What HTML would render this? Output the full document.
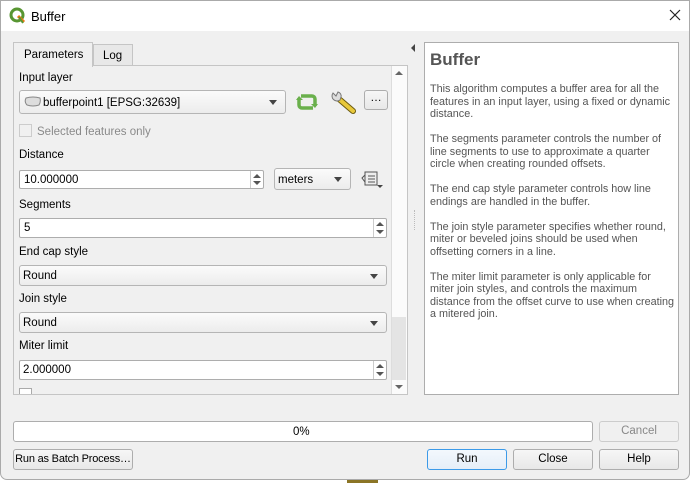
<!DOCTYPE html>
<html><head><style>
*{box-sizing:border-box}
body{margin:0;width:693px;height:483px;background:#fff;font-family:"Liberation Sans",Arial,sans-serif;font-size:11.5px;color:#000;position:relative;overflow:hidden}
.a{position:absolute}
.win{left:0;top:0;width:690px;height:480px;background:#f0f0f0;border:1px solid #aaa;border-radius:0 0 7px 7px}
.title{left:1px;top:1px;width:688px;height:30px;background:#fff}
.inp{background:#fff;border:1px solid #adadad;border-radius:2px}
.cb{background:linear-gradient(#fbfbfb,#ececec);border:1px solid #b5b5b5;border-radius:3px}
.arr{position:absolute;right:8px;top:50%;margin-top:-2px;width:0;height:0;border-left:4px solid transparent;border-right:4px solid transparent;border-top:5px solid #444}
.spin{position:absolute;right:0;top:0;bottom:0;width:13px;border-left:1px solid #ccc}
.spin:before{content:"";position:absolute;left:2px;top:3px;border-left:4px solid transparent;border-right:4px solid transparent;border-bottom:4px solid #555}
.spin:after{content:"";position:absolute;left:2px;bottom:3px;border-left:4px solid transparent;border-right:4px solid transparent;border-top:4px solid #555}
.t{position:absolute;white-space:nowrap}
.btn{background:linear-gradient(#f6f6f6,#e8e8e8);border:1px solid #adadad;border-radius:3px;text-align:center;line-height:19px;white-space:nowrap}
.help p{margin:0 0 12.5px 0}
</style></head><body>
<div class="a win"></div>
<div class="a" style="left:347px;top:480px;width:31px;height:3px;background:#8b7526"></div>
<div class="a title"></div>
<svg class="a" style="left:9px;top:7px" width="17" height="17" viewBox="0 0 17 17"><circle cx="8" cy="8" r="6" fill="none" stroke="#589632" stroke-width="3"/><path d="M9 9 L15 15" stroke="#ee7913" stroke-width="3"/><path d="M10 10 L14 16" stroke="#589632" stroke-width="2"/></svg>
<div class="t" style="left:31px;top:9px;font-size:13px">Buffer</div>
<svg class="a" style="left:669px;top:9px" width="12" height="12"><path d="M1 1 L11 11 M11 1 L1 11" stroke="#222" stroke-width="1.2"/></svg>

<div class="a" style="left:93px;top:44px;width:40px;height:22px;background:#e8e8e8;border:1px solid #c5c5c5"></div>
<div class="t" style="left:103px;top:50px">Log</div>
<div class="a" style="left:13px;top:65px;width:395px;height:330px;background:#f0f0f0;border:1px solid #c5c5c5"></div>
<div class="a" style="left:13px;top:42px;width:80px;height:25px;background:#f0f0f0;border:1px solid #c5c5c5;border-bottom:none"></div>
<div class="t" style="left:24px;top:49px">Parameters</div>
<div class="a" style="left:391px;top:66px;width:16px;height:328px;background:#fbfbfb;border-left:1px solid #ddd"></div>
<div class="a" style="left:392px;top:317px;width:14px;height:63px;background:#e4e4e4"></div>
<div class="a" style="left:395px;top:71px;border-left:4px solid transparent;border-right:4px solid transparent;border-bottom:4px solid #666"></div>
<div class="a" style="left:395px;top:385px;border-left:4px solid transparent;border-right:4px solid transparent;border-top:4px solid #666"></div>

<div class="t" style="left:19px;top:72px">Input layer</div>
<div class="a cb" style="left:19px;top:90px;width:267px;height:24px"><div class="arr"></div></div>
<svg class="a" style="left:24px;top:96px" width="18" height="11"><path d="M2 2 Q9 0 16 2 Q17 6 15 9 Q9 11 3 9 Q0 6 2 2Z" fill="#ddd" stroke="#888"/></svg>
<div class="t" style="left:43px;top:97px">bufferpoint1 [EPSG:32639]</div>
<svg class="a" style="left:295px;top:91px" width="24" height="22" viewBox="0 0 24 22"><path d="M6 5 H17 A3 3 0 0 1 20 8 V15 M18 17 H7 A3 3 0 0 1 4 14 V7" fill="none" stroke="#6ab04c" stroke-width="3.5"/><path d="M1 9 L4 5 L8 9Z M16 13 L20 17 L23 13Z" fill="#6ab04c"/></svg>
<svg class="a" style="left:330px;top:89px" width="26" height="26" viewBox="0 0 26 26"><path d="M9 10 L23 22" stroke="#6b5b12" stroke-width="6" stroke-linecap="round"/><path d="M9 10 L23 22" stroke="#e8c83a" stroke-width="4" stroke-linecap="round"/><path d="M3 4 A5 5 0 0 0 10 11 L11 8 A4 4 0 0 0 8 3 L6 7Z" fill="#ddd" stroke="#777"/></svg>
<div class="a btn" style="left:364px;top:90px;width:24px;height:20px;line-height:14px">…</div>

<div class="a" style="left:19px;top:124px;width:13px;height:13px;border:1px solid #ccc;background:#f0f0f0"></div>
<div class="t" style="left:37px;top:126px;color:#8a8a8a">Selected features only</div>

<div class="t" style="left:19px;top:149px">Distance</div>
<div class="a inp" style="left:19px;top:170px;width:245px;height:19px"><div class="spin"></div></div>
<div class="t" style="left:24px;top:174px">10.000000</div>
<div class="a cb" style="left:274px;top:168px;width:77px;height:22px"><div class="arr"></div></div>
<div class="t" style="left:278px;top:174px">meters</div>
<svg class="a" style="left:360px;top:170px" width="24" height="20"><path d="M5 2 H17 V15 H5Z M2 8 L5 5 V12Z" fill="#eee" stroke="#555"/><path d="M8 6 H15 M8 9 H15 M8 12 H15" stroke="#555"/><path d="M17 15 L23 15 L20 18Z" fill="#444"/></svg>

<div class="t" style="left:19px;top:199px">Segments</div>
<div class="a inp" style="left:19px;top:218px;width:368px;height:20px"><div class="spin"></div></div>
<div class="t" style="left:24px;top:222px">5</div>

<div class="t" style="left:19px;top:246px">End cap style</div>
<div class="a cb" style="left:19px;top:265px;width:368px;height:21px"><div class="arr"></div></div>
<div class="t" style="left:23px;top:270px">Round</div>

<div class="t" style="left:19px;top:293px">Join style</div>
<div class="a cb" style="left:19px;top:312px;width:368px;height:21px"><div class="arr"></div></div>
<div class="t" style="left:23px;top:317px">Round</div>

<div class="t" style="left:19px;top:340px">Miter limit</div>
<div class="a inp" style="left:19px;top:360px;width:368px;height:20px"><div class="spin"></div></div>
<div class="t" style="left:23px;top:364px">2.000000</div>
<div class="a" style="left:19px;top:388px;width:13px;height:6px;border:1px solid #aaa;border-bottom:none;background:#fff"></div>

<div class="a" style="left:411px;top:44px;border-top:4px solid transparent;border-bottom:4px solid transparent;border-right:4px solid #444"></div>
<div class="a" style="left:414px;top:210px;width:1px;height:20px;border-left:1px dotted #bbb"></div>

<div class="a help" style="left:424px;top:42px;width:255px;height:353px;background:#fff;border:1px solid #adadad;padding:6px 1px 6px 5px;color:#555;font-size:10.8px;line-height:12.5px">
<div style="font-size:17px;font-weight:bold;margin:1px 0 13px;line-height:20px">Buffer</div>
<p>This algorithm computes a buffer area for all the features in an input layer, using a fixed or dynamic distance.</p>
<p>The segments parameter controls the number of line segments to use to approximate a quarter circle when creating rounded offsets.</p>
<p>The end cap style parameter controls how line endings are handled in the buffer.</p>
<p>The join style parameter specifies whether round, miter or beveled joins should be used when offsetting corners in a line.</p>
<p>The miter limit parameter is only applicable for miter join styles, and controls the maximum distance from the offset curve to use when creating a mitered join.</p>
</div>

<div class="a inp" style="left:13px;top:421px;width:580px;height:21px;border-radius:3px"></div>
<div class="t" style="left:293px;top:426px">0%</div>
<div class="a btn" style="left:599px;top:421px;width:80px;height:21px;color:#888;background:#f0f0f0;border-color:#ccc">Cancel</div>

<div class="a btn" style="left:13px;top:449px;width:120px;height:21px;font-size:11px;letter-spacing:-0.2px">Run as Batch Process…</div>
<div class="a btn" style="left:427px;top:449px;width:80px;height:21px;border-color:#3c9ae8;background:linear-gradient(#f3f8fd,#e5eef8)">Run</div>
<div class="a btn" style="left:513px;top:449px;width:80px;height:21px">Close</div>
<div class="a btn" style="left:599px;top:449px;width:80px;height:21px">Help</div>
</body></html>
